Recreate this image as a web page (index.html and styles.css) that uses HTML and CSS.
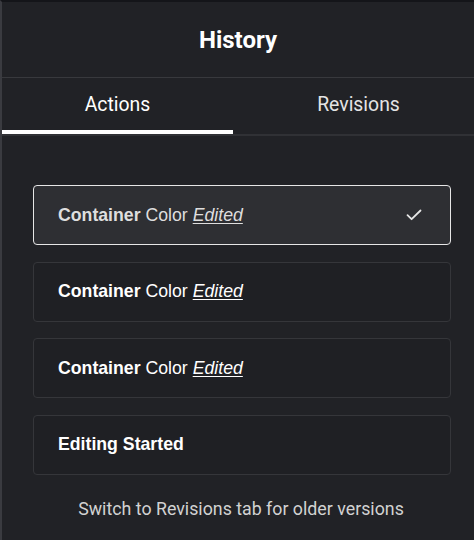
FILE: index.html
```html
<!DOCTYPE html>
<html>
<head>
<meta charset="utf-8">
<link rel="stylesheet" href="styles.css">
</head>
<body>
<div class="panel">
  <header class="header">History</header>
  <nav class="tabs">
    <div class="tab active">Actions</div>
    <div class="tab">Revisions</div>
  </nav>
  <div class="list">
    <div class="item selected">
      <span class="label"><b>Container</b> Color <em>Edited</em></span>
      <svg class="check" width="16" height="12" viewBox="0 0 16 12"><path d="M1.5 6.2 L5.6 10.2 L14.5 1.5" fill="none" stroke="#e6e6e6" stroke-width="1.8" stroke-linecap="round" stroke-linejoin="round"/></svg>
    </div>
    <div class="item">
      <span class="label"><b>Container</b> Color <em>Edited</em></span>
    </div>
    <div class="item">
      <span class="label"><b>Container</b> Color <em>Edited</em></span>
    </div>
    <div class="item">
      <span class="label"><b>Editing Started</b></span>
    </div>
  </div>
  <p class="footer">Switch to Revisions tab for older versions</p>
</div>
</body>
</html>
```
FILE: styles.css
```css
html, body {
  margin: 0;
  padding: 0;
  background: #212226;
}
.panel {
  width: 474px;
  height: 540px;
  box-sizing: border-box;
  border-top: 2px solid #141519;
  border-left: 2px solid #3a3b40;
  background: #212226;
  font-family: Roboto, "Liberation Sans", sans-serif;
  color: #fff;
  overflow: hidden;
}
.header {
  height: 75px;
  display: flex;
  align-items: center;
  justify-content: center;
  font-size: 24px;
  font-weight: 700;
  color: #fff;
  border-bottom: 1px solid #38393d;
}
.tabs {
  display: grid;
  grid-template-columns: 231px 1fr;
  border-bottom: 2px solid #303135;
}
.tab {
  height: 52px;
  display: flex;
  align-items: center;
  justify-content: center;
  font-size: 19.4px;
  color: #e4e4e4;
  border-bottom: 4px solid transparent;
}
.tab + .tab {
  padding-left: 10px;
}
.tab.active {
  color: #fff;
  border-bottom-color: #fff;
}
.list {
  display: flex;
  flex-direction: column;
  gap: 16.5px;
  padding: 49px 23px 0 31px;
}
.item {
  height: 60px;
  box-sizing: border-box;
  border: 1px solid #35363a;
  border-radius: 4px;
  background: #1f2024;
  display: flex;
  align-items: center;
  justify-content: space-between;
  padding: 0 26px 0 24px;
  font-family: "Liberation Sans", Arial, sans-serif;
  font-size: 17.7px;
  color: #fff;
}
.item.selected {
  border: 1.5px solid #e6e6e6;
  background: #2e2f33;
  color: #dedede;
}
.item em {
  text-decoration: underline;
  text-underline-offset: 2px;
}
.check {
  display: block;
  margin-right: 2px;
}
.footer {
  margin: 23px 0 0;
  padding-left: 6px;
  text-align: center;
  font-size: 17.8px;
  color: #d2d2d2;
}
```
